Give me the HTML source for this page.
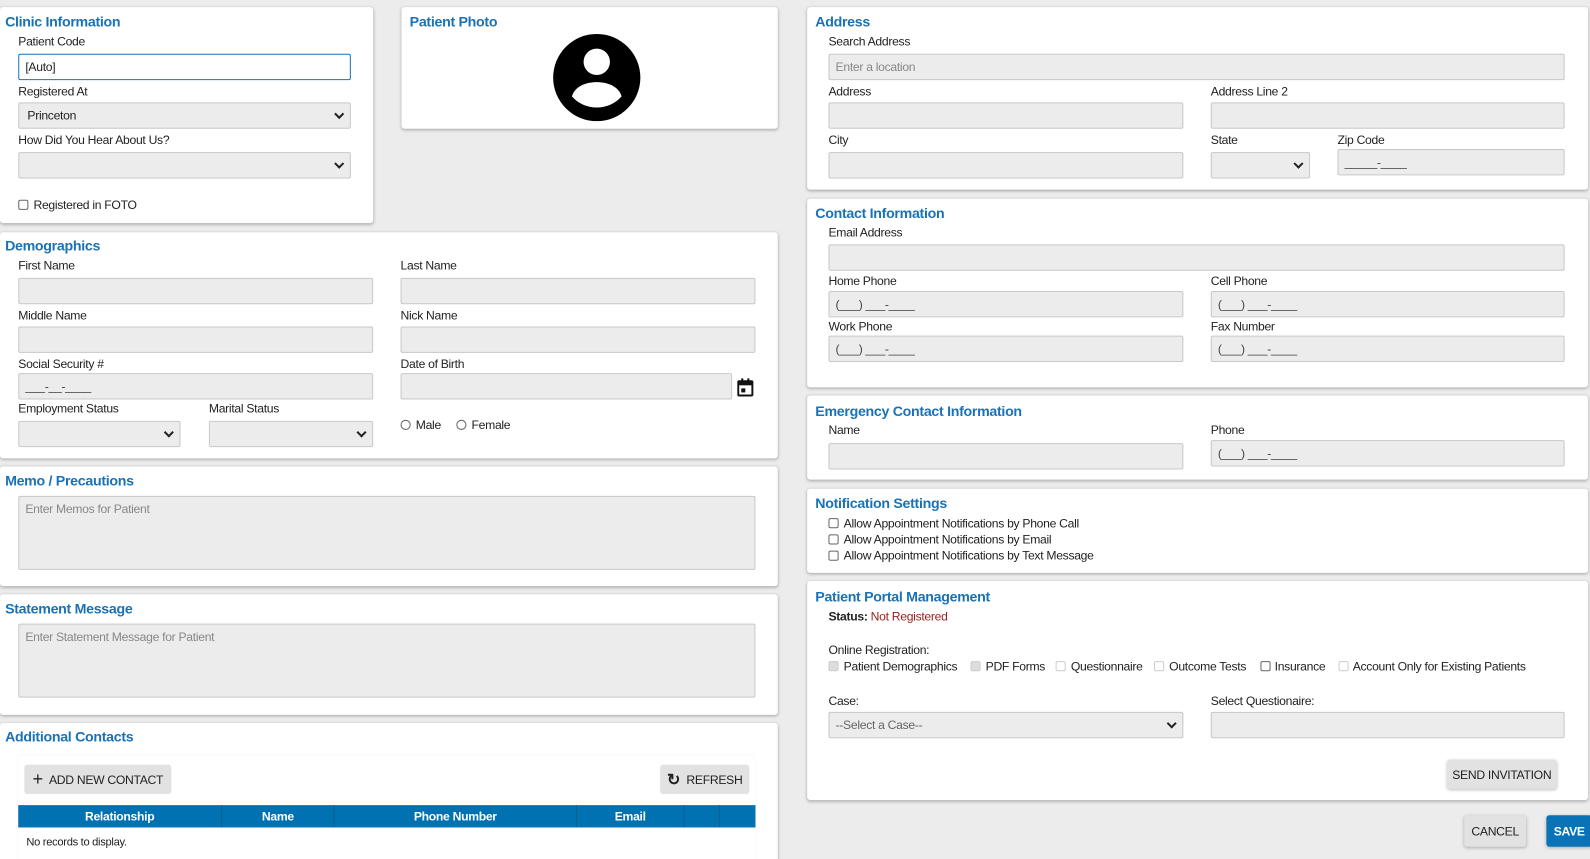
<!DOCTYPE html>
<html><head><meta charset="utf-8"><style>
*{box-sizing:border-box;margin:0;padding:0}
html,body{width:1590px;height:859px;overflow:hidden}
body{background:#ececec;font-family:"Liberation Sans",sans-serif;font-size:12px;color:#222;position:relative}
#w{position:absolute;left:0;top:0;width:1568px;height:848px;transform:scale(1.01403);transform-origin:0 0}
.c{position:absolute;background:#fff;box-shadow:0 1px 3px rgba(0,0,0,.3);border-radius:3px}
.t{position:absolute;color:#1a72b5;font-weight:bold;font-size:14px;letter-spacing:-0.3px}
.l{position:absolute;font-size:12px;letter-spacing:-0.3px;white-space:nowrap}
.i{position:absolute;background:#ececec;border:1px solid #c8c8c8;height:26px;border-radius:2px;color:#888;padding:5px 6px;font-size:12px;letter-spacing:-0.3px}
.s:after{content:"";position:absolute;right:7px;top:7px;width:5px;height:5px;border-right:2px solid #222;border-bottom:2px solid #222;transform:rotate(45deg)}
.cb{position:absolute;width:10px;height:10px;border:1px solid #666;border-radius:2px;background:#fff}
.btn{position:absolute;background:#e2e2e2;border-radius:3px;font-size:12px;letter-spacing:-0.3px;display:flex;align-items:center;justify-content:center;box-shadow:0 1px 3px rgba(0,0,0,.25)}
.th{position:absolute;top:794px;height:22px;color:#fff;font-weight:bold;font-size:12px;letter-spacing:-0.3px;text-align:center;line-height:22px;border-right:1px solid #0a5f95}
</style></head><body><div id="w">

<div class="c" style="left:0;top:7px;width:368px;height:213px"></div>
<div class="t" style="left:5px;top:13px">Clinic Information</div>
<div class="l" style="left:18px;top:34px">Patient Code</div>
<div class="i" style="left:18px;top:53px;width:328px;background:#fff;border-color:#1a72b5;color:#222">[Auto]</div>
<div class="l" style="left:18px;top:83px">Registered At</div>
<div class="i s" style="left:18px;top:101px;width:328px;color:#222;padding-left:8px">Princeton</div>
<div class="l" style="left:18px;top:131px">How Did You Hear About Us?</div>
<div class="i s" style="left:18px;top:150px;width:328px"></div>
<div class="cb" style="left:18px;top:197px"></div>
<div class="l" style="left:33px;top:195px">Registered in FOTO</div>

<div class="c" style="left:396px;top:7px;width:371px;height:120px"></div>
<div class="t" style="left:404px;top:13px">Patient Photo</div>
<svg style="position:absolute;left:545px;top:33px" width="87" height="87" viewBox="0 0 87 87"><circle cx="43.5" cy="43.5" r="43" fill="#000"/><circle cx="43.5" cy="28" r="13" fill="#fff"/><path d="M19 62c3-10 14-14 24.5-14S65 52 68 62c-6 7-15 11-24.5 11S25 69 19 62z" fill="#fff"/></svg>

<div class="c" style="left:0;top:229px;width:767px;height:223px"></div>
<div class="t" style="left:5px;top:234px">Demographics</div>
<div class="l" style="left:18px;top:255px">First Name</div>
<div class="i" style="left:18px;top:274px;width:350px"></div>
<div class="l" style="left:395px;top:255px">Last Name</div>
<div class="i" style="left:395px;top:274px;width:350px"></div>
<div class="l" style="left:18px;top:304px">Middle Name</div>
<div class="i" style="left:18px;top:322px;width:350px"></div>
<div class="l" style="left:395px;top:304px">Nick Name</div>
<div class="i" style="left:395px;top:322px;width:350px"></div>
<div class="l" style="left:18px;top:352px">Social Security #</div>
<div class="i" style="left:18px;top:368px;width:350px;color:#444">___-__-____</div>
<div class="l" style="left:395px;top:352px">Date of Birth</div>
<div class="i" style="left:395px;top:368px;width:327px"></div>
<svg style="position:absolute;left:727px;top:373px" width="16" height="18" viewBox="0 0 16 18"><rect x="1" y="3" width="14" height="14" rx="1" fill="none" stroke="#111" stroke-width="2"/><rect x="1" y="3" width="14" height="4" fill="#111"/><rect x="4" y="0" width="2" height="4" fill="#111"/><rect x="10" y="0" width="2" height="4" fill="#111"/><rect x="4" y="10" width="4" height="4" fill="#111"/></svg>
<div class="l" style="left:18px;top:396px">Employment Status</div>
<div class="i s" style="left:18px;top:415px;width:160px"></div>
<div class="l" style="left:206px;top:396px">Marital Status</div>
<div class="i s" style="left:206px;top:415px;width:162px"></div>
<div class="cb" style="left:395px;top:414px;border-radius:50%"></div>
<div class="l" style="left:410px;top:412px">Male</div>
<div class="cb" style="left:450px;top:414px;border-radius:50%"></div>
<div class="l" style="left:465px;top:412px">Female</div>

<div class="c" style="left:0;top:460px;width:767px;height:118px"></div>
<div class="t" style="left:5px;top:466px">Memo / Precautions</div>
<div class="i" style="left:18px;top:489px;width:727px;height:73px">Enter Memos for Patient</div>

<div class="c" style="left:0;top:586px;width:767px;height:119px"></div>
<div class="t" style="left:5px;top:592px">Statement Message</div>
<div class="i" style="left:18px;top:615px;width:727px;height:73px">Enter Statement Message for Patient</div>

<div class="c" style="left:0;top:713px;width:767px;height:160px"></div>
<div class="t" style="left:5px;top:718px">Additional Contacts</div>
<div style="position:absolute;left:18px;top:745px;width:727px;height:120px;background:#fff;box-shadow:0 0 2px rgba(0,0,0,.1)"></div>
<div class="btn" style="left:24px;top:754px;width:145px;height:29px;box-shadow:none"><span style="font-size:18px;margin-right:6px">+</span>ADD NEW CONTACT</div>
<div class="btn" style="left:651px;top:754px;width:88px;height:29px;box-shadow:none"><span style="font-size:16px;margin-right:6px;font-weight:bold">↻</span>REFRESH</div>
<div style="position:absolute;left:18px;top:794px;width:727px;height:22px;background:#0071b1"></div>
<div class="th" style="left:18px;width:201px">Relationship</div>
<div class="th" style="left:219px;width:111px">Name</div>
<div class="th" style="left:330px;width:239px">Phone Number</div>
<div class="th" style="left:569px;width:106px">Email</div>
<div class="th" style="left:675px;width:35px"></div>
<div class="l" style="left:26px;top:825px;font-size:11px">No records to display.</div>

<div class="c" style="left:796px;top:7px;width:770px;height:180px"></div>
<div class="t" style="left:804px;top:13px">Address</div>
<div class="l" style="left:817px;top:34px">Search Address</div>
<div class="i" style="left:817px;top:53px;width:726px">Enter a location</div>
<div class="l" style="left:817px;top:83px">Address</div>
<div class="i" style="left:817px;top:101px;width:350px"></div>
<div class="l" style="left:1194px;top:83px">Address Line 2</div>
<div class="i" style="left:1194px;top:101px;width:349px"></div>
<div class="l" style="left:817px;top:131px">City</div>
<div class="i" style="left:817px;top:150px;width:350px"></div>
<div class="l" style="left:1194px;top:131px">State</div>
<div class="i s" style="left:1194px;top:150px;width:98px"></div>
<div class="l" style="left:1319px;top:131px">Zip Code</div>
<div class="i" style="left:1319px;top:147px;width:224px;color:#444">_____-____</div>

<div class="c" style="left:796px;top:196px;width:770px;height:186px"></div>
<div class="t" style="left:804px;top:202px">Contact Information</div>
<div class="l" style="left:817px;top:222px">Email Address</div>
<div class="i" style="left:817px;top:241px;width:726px"></div>
<div class="l" style="left:817px;top:270px">Home Phone</div>
<div class="i" style="left:817px;top:287px;width:350px;color:#444">(___) ___-____</div>
<div class="l" style="left:1194px;top:270px">Cell Phone</div>
<div class="i" style="left:1194px;top:287px;width:349px;color:#444">(___) ___-____</div>
<div class="l" style="left:817px;top:315px">Work Phone</div>
<div class="i" style="left:817px;top:331px;width:350px;color:#444">(___) ___-____</div>
<div class="l" style="left:1194px;top:315px">Fax Number</div>
<div class="i" style="left:1194px;top:331px;width:349px;color:#444">(___) ___-____</div>

<div class="c" style="left:796px;top:390px;width:770px;height:83px"></div>
<div class="t" style="left:804px;top:397px">Emergency Contact Information</div>
<div class="l" style="left:817px;top:417px">Name</div>
<div class="i" style="left:817px;top:437px;width:350px"></div>
<div class="l" style="left:1194px;top:417px">Phone</div>
<div class="i" style="left:1194px;top:434px;width:349px;color:#444">(___) ___-____</div>

<div class="c" style="left:796px;top:482px;width:770px;height:83px"></div>
<div class="t" style="left:804px;top:488px">Notification Settings</div>
<div class="cb" style="left:817px;top:511px"></div><div class="l" style="left:832px;top:509px">Allow Appointment Notifications by Phone Call</div>
<div class="cb" style="left:817px;top:527px"></div><div class="l" style="left:832px;top:525px">Allow Appointment Notifications by Email</div>
<div class="cb" style="left:817px;top:543px"></div><div class="l" style="left:832px;top:541px">Allow Appointment Notifications by Text Message</div>

<div class="c" style="left:796px;top:573px;width:770px;height:216px"></div>
<div class="t" style="left:804px;top:580px">Patient Portal Management</div>
<div class="l" style="left:817px;top:601px"><b>Status:</b> <span style="color:#9b1c1c">Not Registered</span></div>
<div class="l" style="left:817px;top:634px">Online Registration:</div>
<div class="cb" style="left:817px;top:652px;background:#ddd;border-color:#ccc"></div><div class="l" style="left:832px;top:650px">Patient Demographics</div>
<div class="cb" style="left:957px;top:652px;background:#ddd;border-color:#ccc"></div><div class="l" style="left:972px;top:650px">PDF Forms</div>
<div class="cb" style="left:1041px;top:652px;border-color:#ccc"></div><div class="l" style="left:1056px;top:650px">Questionnaire</div>
<div class="cb" style="left:1138px;top:652px;border-color:#ccc"></div><div class="l" style="left:1153px;top:650px">Outcome Tests</div>
<div class="cb" style="left:1243px;top:652px"></div><div class="l" style="left:1257px;top:650px">Insurance</div>
<div class="cb" style="left:1320px;top:652px;border-color:#ccc"></div><div class="l" style="left:1334px;top:650px">Account Only for Existing Patients</div>
<div class="l" style="left:817px;top:684px">Case:</div>
<div class="i s" style="left:817px;top:702px;width:350px;color:#666">--Select a Case--</div>
<div class="l" style="left:1194px;top:684px">Select Questionaire:</div>
<div class="i" style="left:1194px;top:702px;width:349px"></div>
<div class="btn" style="left:1427px;top:749px;width:108px;height:29px">SEND INVITATION</div>
<div class="btn" style="left:1444px;top:804px;width:61px;height:31px">CANCEL</div>
<div class="btn" style="left:1525px;top:804px;width:45px;height:31px;background:#0a72b7;color:#fff;font-weight:bold">SAVE</div>
</div></body></html>
